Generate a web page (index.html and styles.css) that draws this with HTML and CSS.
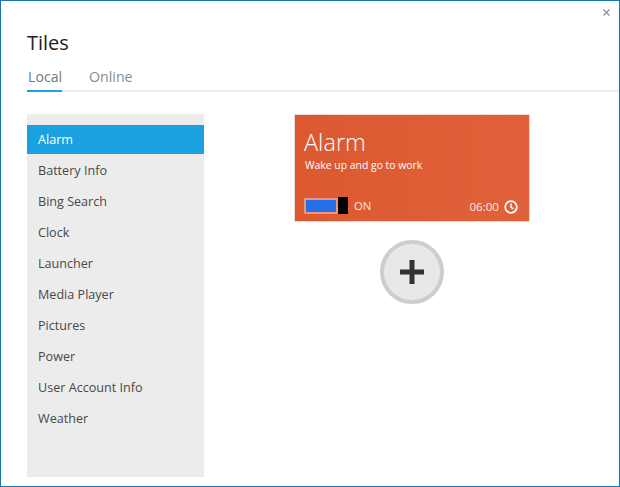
FILE: index.html
```html
<!DOCTYPE html>
<html lang="en">
<head>
<meta charset="utf-8">
<title>Tiles</title>
<link rel="stylesheet" href="styles.css">
</head>
<body>
<div class="window">
  <button class="close" aria-label="Close">
    <svg width="7" height="7" viewBox="0 0 7 7"><path d="M.5.5l6 6M6.5.5l-6 6" stroke="#8a8a8a" stroke-width="1.1" fill="none"/></svg>
  </button>
  <h1 class="title">Tiles</h1>
  <div class="tabs">
    <span class="tab tab-active">Local</span>
    <span class="tab">Online</span>
  </div>
  <div class="content">
    <ul class="list">
      <li class="item item-active">Alarm</li>
      <li class="item">Battery Info</li>
      <li class="item">Bing Search</li>
      <li class="item">Clock</li>
      <li class="item">Launcher</li>
      <li class="item">Media Player</li>
      <li class="item">Pictures</li>
      <li class="item">Power</li>
      <li class="item">User Account Info</li>
      <li class="item">Weather</li>
    </ul>
    <div class="preview">
      <div class="tile">
        <div class="tile-name">Alarm</div>
        <div class="tile-desc">Wake up and go to work</div>
        <div class="tile-foot">
          <div class="toggle">
            <div class="toggle-track"></div>
            <div class="toggle-thumb"></div>
          </div>
          <span class="toggle-label">ON</span>
          <span class="time">06:00</span>
          <svg class="clock" width="14" height="14" viewBox="0 0 14 14"><circle cx="7" cy="7" r="5.8" fill="none" stroke="#fff" stroke-width="1.8"/><path d="M7 3.4V7.3l2.5 1.6" fill="none" stroke="#fff" stroke-width="1.5"/></svg>
        </div>
      </div>
      <button class="add" aria-label="Add">
        <svg width="26" height="26" viewBox="0 0 26 26"><path d="M13 1v24M1 13h24" stroke="#333" stroke-width="5" fill="none"/></svg>
      </button>
    </div>
  </div>
</div>
</body>
</html>
```

FILE: styles.css
```css
* { box-sizing: border-box; }
html, body { margin: 0; padding: 0; }
body { width: 620px; height: 487px; overflow: hidden; background: #fff; font-family: "Open Sans", "Noto Sans", sans-serif; }
.window { position: relative; width: 620px; height: 487px; border: 1px solid #1a75b0; padding: 0 0 0 26px; }
.close { position: absolute; top: 7px; right: 8px; width: 9px; height: 9px; padding: 1px; border: 0; background: none; display: flex; }
.title { margin: 0; padding-top: 28px; height: 62px; font-size: 20px; line-height: 28px; font-weight: 400; color: #222; }
.tabs { display: flex; gap: 27px; height: 29px; border-bottom: 2px solid #ececec; }
.tab { font-size: 14.2px; line-height: 27px; height: 29px; color: #8c8c8c; }
.tab-active { color: #777; border-bottom: 2px solid #1ba1e2; width: 35px; padding-left: 1px; }
.content { display: flex; margin-top: 22px; }
.list { list-style: none; margin: 0; padding: 11px 0 0; width: 177px; height: 363px; background: #ececec; display: flex; flex-direction: column; gap: 2px; }
.item { height: 29px; line-height: 30px; padding-left: 11px; font-size: 12.6px; color: #484848; }
.item-active { background: #1ba1e2; color: #fff; }
.preview { margin-left: 90px; width: 236px; display: flex; flex-direction: column; align-items: center; }
.tile { width: 236px; height: 108px; background: linear-gradient(90deg, #dc5930, #e0613a); border: 1px solid #e6dcd8; padding: 12px 11px 0 9px; color: #fff; display: flex; flex-direction: column; }
.tile-name { font-size: 23.5px; line-height: 30px; font-weight: 300; }
.tile-desc { font-size: 10.4px; line-height: 16px; padding-left: 1px; color: #fff; }
.tile-foot { display: flex; align-items: center; margin-top: 23px; height: 18px; }
.toggle { display: flex; align-items: stretch; width: 44px; height: 17px; }
.toggle-track { width: 34px; margin: 1px 0 0; background: #2570e8; border: 2px solid #f0957a; }
.toggle-thumb { width: 10px; background: #000; }
.toggle-label { margin-left: 6px; font-size: 11.3px; color: #fbe9e2; }
.time { margin-left: auto; padding-top: 3px; font-size: 11.6px; color: #fbe9e2; }
.clock { margin-left: 5px; margin-top: 3px; }
.add { margin-top: 18px; width: 64px; height: 64px; border-radius: 50%; border: 4px solid #cdcdcd; background: #e8e8e8; padding: 0; display: flex; align-items: center; justify-content: center; }
```
